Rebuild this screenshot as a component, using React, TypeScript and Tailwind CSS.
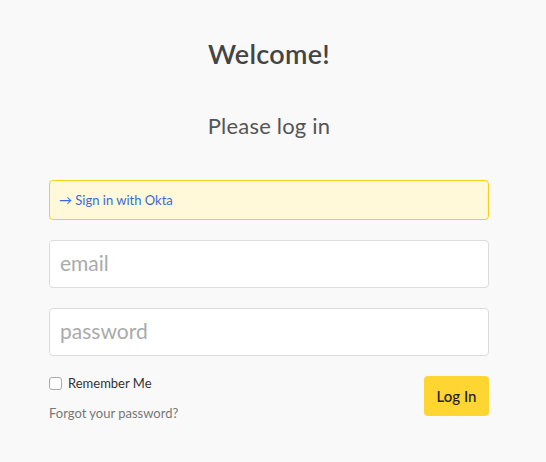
const App = () => {
  return (
    <div className="min-h-[462px] bg-[#f9f9f9] font-['Lato','Noto_Sans',sans-serif] text-[#444]">
      <div className="w-[440px] ml-[49px] pt-[38px] flex flex-col">
        <h1 className="text-center text-[27px] font-semibold leading-[32px] text-[#444] tracking-[0.3px]">Welcome!</h1>
        <h2 className="text-center text-[22px] leading-[28px] mt-[42px] text-[#555] tracking-[0.2px]">Please log in</h2>

        <a className="mt-[40px] h-[40px] flex items-center px-[9px] pt-[2px] rounded-[4px] border border-[#f7cf1c] bg-[#fff8d9] text-[13px] text-[#3a6ad6]">
          → Sign in with Okta
        </a>

        <input
          type="text"
          placeholder="email"
          className="mt-[20px] h-[48px] px-[10px] pb-[3px] rounded-[4px] border border-[#dcdcdc] bg-white text-[21px] placeholder:text-[#aaa] outline-none"
        />
        <input
          type="password"
          placeholder="password"
          className="mt-[20px] h-[48px] px-[10px] pb-[3px] rounded-[4px] border border-[#dcdcdc] bg-white text-[21px] placeholder:text-[#aaa] outline-none"
        />

        <div className="mt-[20px] flex justify-between items-start">
          <div className="flex flex-col">
            <label className="flex items-center gap-[6px] h-[14px] text-[13px] leading-none text-[#333]">
              <span className="w-[13px] h-[13px] rounded-[3px] border border-[#aaa] bg-white" />
              Remember Me
            </label>
            <a className="mt-[17px] text-[13px] leading-none text-[#777]">Forgot your password?</a>
          </div>
          <button className="w-[65px] h-[40px] rounded-[4px] bg-[#fed531] text-[15px] font-medium text-[#222]">Log In</button>
        </div>
      </div>
    </div>
  )
}

export default App
